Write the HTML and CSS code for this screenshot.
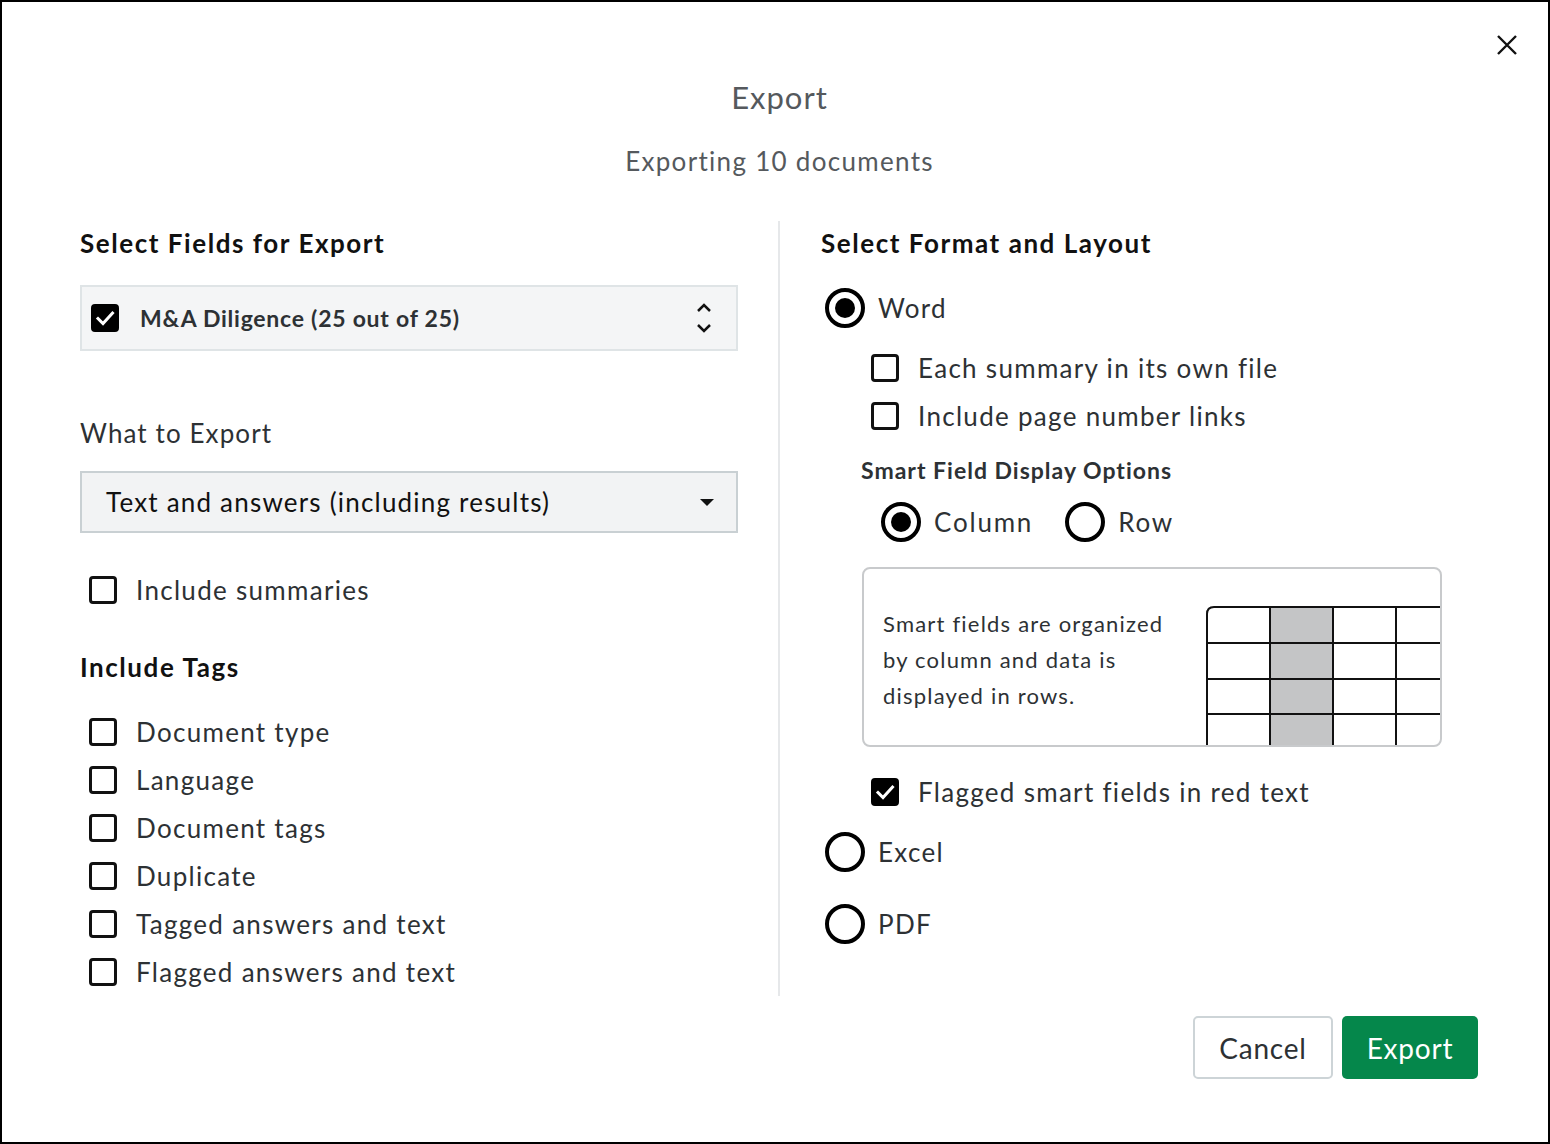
FILE: index.html
```html
<!DOCTYPE html>
<html lang="en">
<head>
<meta charset="utf-8">
<title>Export</title>
<link rel="stylesheet" href="styles.css">
</head>
<body>
<div class="modal">
  <button class="close" aria-label="Close">
    <svg width="20" height="20" viewBox="0 0 20 20"><path d="M1 1 L19 19 M19 1 L1 19" stroke="#111" stroke-width="2.4" fill="none"/></svg>
  </button>
  <header class="head">
    <h1 class="title">Export</h1>
    <p class="subtitle">Exporting 10 documents</p>
  </header>
  <div class="columns">
    <section class="col-left">
      <h2 class="heading">Select Fields for Export</h2>
      <div class="field-picker">
        <span class="cb checked"><svg viewBox="0 0 28 28" width="28" height="28"><path d="M7 14.5 L12 19.5 L21.5 9" stroke="#fff" stroke-width="3" fill="none" stroke-linecap="square"/></svg></span>
        <span class="picker-label">M&amp;A Diligence (25 out of 25)</span>
        <svg class="updown" width="16" height="30" viewBox="0 0 16 30"><path d="M2 8 L8 2 L14 8 M2 22 L8 28 L14 22" stroke="#111" stroke-width="2.5" fill="none"/></svg>
      </div>
      <h3 class="subheading">What to Export</h3>
      <div class="select">
        <span>Text and answers (including results)</span>
        <svg class="caret" width="14" height="8" viewBox="0 0 14 8"><path d="M0 0 H14 L7 7 Z" fill="#111"/></svg>
      </div>
      <label class="row summaries"><span class="cb"></span><span>Include summaries</span></label>
      <h2 class="heading tags-heading">Include Tags</h2>
      <div class="tag-list">
        <label class="row tag"><span class="cb"></span><span>Document type</span></label>
        <label class="row tag"><span class="cb"></span><span>Language</span></label>
        <label class="row tag"><span class="cb"></span><span>Document tags</span></label>
        <label class="row tag"><span class="cb"></span><span>Duplicate</span></label>
        <label class="row tag"><span class="cb"></span><span>Tagged answers and text</span></label>
        <label class="row tag"><span class="cb"></span><span>Flagged answers and text</span></label>
      </div>
    </section>
    <div class="divider"></div>
    <section class="col-right">
      <h2 class="heading">Select Format and Layout</h2>
      <label class="row radio-row word"><span class="radio on"></span><span>Word</span></label>
      <div class="word-opts">
        <label class="row opt"><span class="cb"></span><span>Each summary in its own file</span></label>
        <label class="row opt"><span class="cb"></span><span>Include page number links</span></label>
        <h4 class="smart-heading">Smart Field Display Options</h4>
        <div class="layout-radios">
          <label class="row radio-row"><span class="radio on"></span><span>Column</span></label>
          <label class="row radio-row"><span class="radio"></span><span>Row</span></label>
        </div>
        <div class="info-box">
          <p class="info-text">Smart fields are organized by column and data is displayed in rows.</p>
          <svg class="grid" width="240" height="140" viewBox="0 0 240 140">
            <rect x="64" y="1" width="63" height="139" fill="#c4c5c6"/>
            <path d="M1 140 V8 Q1 1 8 1 H240" stroke="#111" stroke-width="2" fill="none"/>
            <path d="M1 37 H240 M1 73 H240 M1 108 H240 M64 1 V140 M127 1 V140 M190 1 V140" stroke="#111" stroke-width="2" fill="none"/>
          </svg>
        </div>
        <label class="row opt flagged"><span class="cb checked"><svg viewBox="0 0 28 28" width="28" height="28"><path d="M7 14.5 L12 19.5 L21.5 9" stroke="#fff" stroke-width="3" fill="none" stroke-linecap="square"/></svg></span><span>Flagged smart fields in red text</span></label>
      </div>
      <label class="row radio-row excel"><span class="radio"></span><span>Excel</span></label>
      <label class="row radio-row pdf"><span class="radio"></span><span>PDF</span></label>
    </section>
  </div>
  <footer class="actions">
    <button class="btn btn-cancel">Cancel</button>
    <button class="btn btn-export">Export</button>
  </footer>
</div>
</body>
</html>
```

FILE: styles.css
```css
* { box-sizing: border-box; }
html, body { margin: 0; padding: 0; background: #fff; }
body { font-family: Lato, "Open Sans", sans-serif; color: #2d3134; }

.modal {
  position: relative;
  width: 1550px;
  height: 1144px;
  border: 2px solid #000;
  background: #fff;
  display: flex;
  flex-direction: column;
}

.close {
  position: absolute;
  top: 33px;
  right: 31px;
  background: none;
  border: 0;
  padding: 0;
  width: 20px;
  height: 20px;
  display: block;
}
.close svg { display: block; }

.head { text-align: center; padding-top: 74px; padding-left: 9px; }
.title {
  margin: 0;
  font-size: 31px;
  line-height: 42px;
  font-weight: 400;
  letter-spacing: 1px;
  color: #55595d;
}
.subtitle {
  margin: 23px 0 0;
  font-size: 26px;
  line-height: 40px;
  letter-spacing: 1.3px;
  color: #55595d;
}

.columns {
  display: flex;
  margin-top: 40px;
  padding-left: 78px;
  align-items: stretch;
}
.col-left { width: 658px; display: flex; flex-direction: column; }
.divider { width: 2px; background: #e6e8ea; margin: 0 41px 0 40px; }
.col-right { flex: 1; display: flex; flex-direction: column; }

.heading {
  margin: 0;
  font-size: 26px;
  line-height: 44px;
  font-weight: 700;
  letter-spacing: 1.55px;
  color: #111;
}

.field-picker {
  margin-top: 20px;
  height: 66px;
  background: #f4f5f6;
  border: 2px solid #dfe4e6;
  display: flex;
  align-items: center;
  padding: 0 24px 0 9px;
}
.picker-label {
  margin-left: 21px;
  font-size: 23px;
  font-weight: 700;
  letter-spacing: 0.75px;
  color: #2d3134;
  flex: 1;
}
.updown { display: block; }

.subheading {
  margin: 62px 0 0;
  font-size: 26px;
  line-height: 40px;
  font-weight: 400;
  letter-spacing: 1.1px;
  color: #2d3134;
}

.select {
  margin-top: 18px;
  height: 62px;
  background: #f2f3f4;
  border: 2px solid #c9d0d3;
  display: flex;
  align-items: center;
  justify-content: space-between;
  padding: 0 22px 0 24px;
  font-size: 26px;
  letter-spacing: 1.2px;
  color: #111;
}
.caret { display: block; margin-top: 2px; }

.row {
  display: flex;
  align-items: center;
  font-size: 26px;
  letter-spacing: 1.3px;
  color: #2d3134;
}

.cb {
  width: 28px;
  height: 28px;
  border: 3px solid #111;
  border-radius: 4px;
  flex: none;
  display: block;
  position: relative;
}
.cb.checked { background: #000; border-color: #000; }
.cb.checked svg { position: absolute; left: -3px; top: -3px; }

.summaries { margin-top: 43px; height: 28px; padding-left: 9px; gap: 19px; }
.tags-heading { margin-top: 43px; line-height: 40px; }
.tag-list { margin-top: 21px; display: flex; flex-direction: column; }
.tag { height: 48px; padding-left: 9px; gap: 19px; }

.radio {
  width: 40px;
  height: 40px;
  border: 4px solid #000;
  border-radius: 50%;
  flex: none;
  display: flex;
  align-items: center;
  justify-content: center;
}
.radio.on::after {
  content: "";
  width: 20px;
  height: 20px;
  border-radius: 50%;
  background: #000;
}
.radio-row { height: 40px; gap: 13px; padding-left: 4px; }
.word { margin-top: 23px; }

.word-opts { display: flex; flex-direction: column; padding-left: 41px; margin-top: 16px; }
.opt { height: 48px; padding-left: 9px; gap: 19px; }

.smart-heading {
  margin: 15px 0 0;
  font-size: 23px;
  line-height: 30px;
  font-weight: 700;
  letter-spacing: 1px;
  color: #2d3134;
  margin-left: -1px;
}
.layout-radios { display: flex; gap: 32px; margin-top: 17px; padding-left: 19px; }
.layout-radios .radio-row { padding-left: 0; }
.layout-radios .radio-row span:last-child { letter-spacing: 1.8px; }

.info-box {
  margin-top: 25px;
  width: 580px;
  height: 180px;
  border: 2px solid #c8cacc;
  border-radius: 8px;
  overflow: hidden;
  display: flex;
  align-items: center;
}
.info-text {
  flex: none;
  margin: 6px 0 0;
  width: 342px;
  padding-left: 19px;
  padding-right: 22px;
  font-size: 22px;
  line-height: 36px;
  letter-spacing: 1.2px;
  color: #2d3134;
}
.grid { align-self: flex-end; flex: none; display: block; margin-bottom: -1px; }

.flagged { margin-top: 21px; }
.excel { margin-top: 16px; }
.pdf { margin-top: 32px; }

.actions {
  display: flex;
  justify-content: flex-end;
  gap: 9px;
  padding-right: 70px;
  margin-top: 20px;
}
.btn {
  height: 63px;
  font-family: Lato, "Open Sans", sans-serif;
  font-size: 28px;
  letter-spacing: 0.8px;
  border-radius: 5px;
  padding: 0;
  cursor: pointer;
}
.btn-cancel {
  width: 140px;
  background: #fff;
  border: 2px solid #cdd4d7;
  color: #2d3134;
}
.btn-export {
  width: 136px;
  background: #05874b;
  border: 0;
  color: #fff;
}
```
